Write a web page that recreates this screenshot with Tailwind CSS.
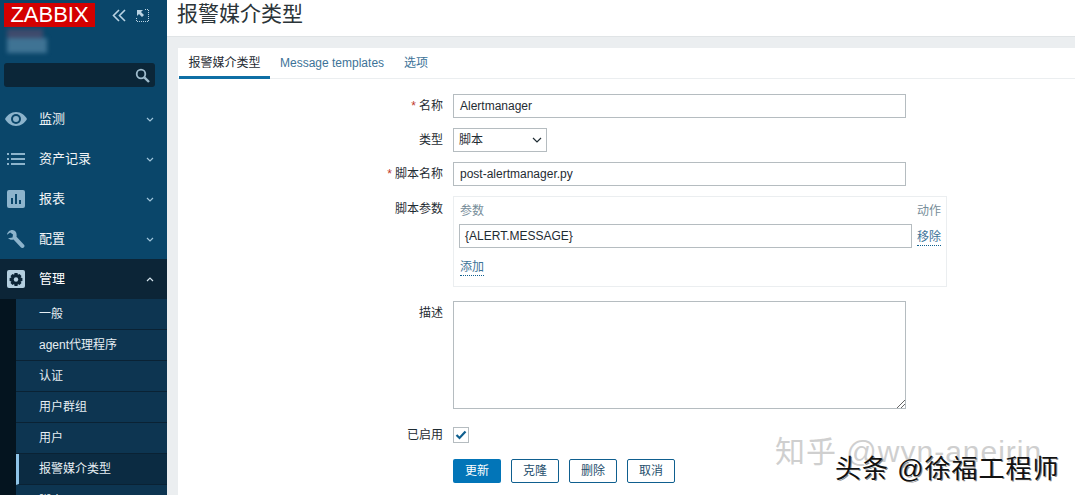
<!DOCTYPE html>
<html lang="zh-CN">
<head>
  <meta charset="UTF-8" />
  <title>报警媒介类型</title>
  <script src="https://cdn.jsdelivr.net/npm/@tailwindcss/browser@4"></script>
</head>
<body class="relative h-[495px] w-[1075px] overflow-hidden bg-[#ebeef0] font-['Liberation_Sans','Noto_Sans_CJK_SC',sans-serif] text-[12px] text-[#1f2c33]">
  <div class="flex h-[495px]">
    <!-- sidebar -->
    <aside class="flex h-[495px] w-[167px] shrink-0 flex-col overflow-hidden bg-[#0a466a] text-[#f2f5f7]">
      <div class="flex h-[28px] shrink-0 items-start pl-[4px] pt-[3px]">
        <div class="flex h-[24px] w-[91px] items-center justify-center bg-[#d40000] text-[22px] leading-none text-white">ZABBIX</div>
        <svg class="ml-[17px] mt-[6px]" width="14" height="13" viewBox="0 0 14 13" fill="none" stroke="#b9d3e3" stroke-width="1.6"><path d="M7 1 1.5 6.5 7 12M13 1 7.5 6.5 13 12"/></svg>
        <svg class="ml-[10px] mt-[6px]" width="13" height="13" viewBox="0 0 13 13" fill="none"><path d="M1 1h6L5 3l3 3-2 2-3-3-2 2z" fill="#b9d3e3"/><path d="M9 .5h3.500v12H.5V9" stroke="#b9d3e3" stroke-dasharray="1 1"/></svg>
      </div>
      <div class="ml-[7px] mt-[1px] flex h-[26px] w-[40px] shrink-0 flex-col blur-[2px]">
        <div class="h-[9px] w-[36px] bg-[#3f4a6c]"></div>
        <div class="h-[15px] w-[40px] bg-[#3f7394]"></div>
      </div>
      <div class="ml-[4px] mt-[8px] flex h-[24px] w-[151px] shrink-0 items-center justify-end rounded-[3px] bg-[#0b2638] pr-[5px]">
        <svg width="15" height="15" viewBox="0 0 15 15" fill="none" stroke="#9fbccd" stroke-width="1.800"><circle cx="6" cy="6" r="4.300"/><path d="m9.300 9.300 4.700 4.700" stroke-width="2.400"/></svg>
      </div>

      <nav class="mt-[12px] flex shrink-0 flex-col text-[13px]">
        <div class="flex h-[40px] items-center pl-[5px] pr-[13px]">
          <svg class="w-[22px]" width="22" height="14" viewBox="0 0 22 14"><path d="M11 0C6 0 2.300 3 0 7c2.300 4 6 7 11 7s8.700-3 11-7c-2.300-4-6-7-11-7z" fill="#8db4cc"/><circle cx="11" cy="7" r="5" fill="#0a466a"/><circle cx="11" cy="7" r="3" fill="#8db4cc"/></svg>
          <span class="ml-[12px] flex-1">监测</span>
          <svg width="8" height="5" viewBox="0 0 8 5" fill="none" stroke="#9fc4da" stroke-width="1.200"><path d="m1 1 3 3 3-3"/></svg>
        </div>
        <div class="flex h-[40px] items-center pl-[7px] pr-[13px]">
          <svg width="18" height="12" viewBox="0 0 18 12" fill="#8db4cc"><path d="M0 0h2v2H0zM4 0h14v2H4zM0 5h2v2H0zM4 5h14v2H4zM0 10h2v2H0zM4 10h14v2H4z"/></svg>
          <span class="ml-[14px] flex-1">资产记录</span>
          <svg width="8" height="5" viewBox="0 0 8 5" fill="none" stroke="#9fc4da" stroke-width="1.200"><path d="m1 1 3 3 3-3"/></svg>
        </div>
        <div class="flex h-[40px] items-center pl-[7px] pr-[13px]">
          <svg width="18" height="18" viewBox="0 0 18 18"><rect width="18" height="18" rx="2" fill="#8db4cc"/><path d="M4 8h2v6H4zM8 4h2v10H8zM12 10h2v4h-2z" fill="#0a466a"/></svg>
          <span class="ml-[14px] flex-1">报表</span>
          <svg width="8" height="5" viewBox="0 0 8 5" fill="none" stroke="#9fc4da" stroke-width="1.200"><path d="m1 1 3 3 3-3"/></svg>
        </div>
        <div class="flex h-[40px] items-center pl-[7px] pr-[13px]">
          <svg width="18" height="18" viewBox="0 0 18 18" fill="#8db4cc"><path d="M5.500 0C2.500 0 .2 2.200 0 4.800L3.200 2.500 6 4.500 5.500 7.500 1 8.300C2.300 9.600 4.500 10.200 6.500 9.500L14 17.500c.8.700 1.800.7 2.800 0 .8-.8 1-2 .2-2.800L9.500 6.800C10.200 3 8.500 0 5.500 0z"/></svg>
          <span class="ml-[14px] flex-1">配置</span>
          <svg width="8" height="5" viewBox="0 0 8 5" fill="none" stroke="#9fc4da" stroke-width="1.200"><path d="m1 1 3 3 3-3"/></svg>
        </div>
        <div class="flex h-[40px] items-center bg-[#0c2537] pl-[7px] pr-[13px] text-white">
          <svg width="18" height="18" viewBox="0 0 18 18"><rect width="18" height="18" rx="2" fill="#b4cfdf"/><path d="M7.500 3h3l.4 1.800 1.600-.8 2 2-.9 1.600 1.800.4v3l-1.800.4.900 1.600-2 2-1.600-.9-.4 1.900h-3l-.4-1.900-1.600.9-2-2 .9-1.600L2.600 11V8l1.800-.4-.9-1.600 2-2 1.600.8z" fill="#0c2537"/><circle cx="9" cy="9.500" r="2.200" fill="#b4cfdf"/></svg>
          <span class="ml-[14px] flex-1">管理</span>
          <svg width="8" height="5" viewBox="0 0 8 5" fill="none" stroke="#d7e6ef" stroke-width="1.200"><path d="m1 4 3-3 3 3"/></svg>
        </div>
        <div class="flex bg-[#04141f]">
          <ul class="ml-[16px] w-[151px] text-[12px] text-[#e6eef3]">
            <li class="flex h-[31px] items-center border-b border-[#0a2234] bg-[#0d3551] pl-[23px]">一般</li>
            <li class="flex h-[31px] items-center border-b border-[#0a2234] bg-[#0d3551] pl-[23px]">agent代理程序</li>
            <li class="flex h-[31px] items-center border-b border-[#0a2234] bg-[#0d3551] pl-[23px]">认证</li>
            <li class="flex h-[31px] items-center border-b border-[#0a2234] bg-[#0d3551] pl-[23px]">用户群组</li>
            <li class="flex h-[31px] items-center border-b border-[#0a2234] bg-[#0d3551] pl-[23px]">用户</li>
            <li class="flex h-[31px] items-center border-b border-[#0a2234] border-l-[3px] border-l-[#8fc4e8] bg-[#0b2b42] pl-[20px]">报警媒介类型</li>
            <li class="flex h-[31px] items-center bg-[#0d3551] pl-[23px]">脚本</li>
          </ul>
        </div>
      </nav>
    </aside>

    <!-- main -->
    <main class="flex min-w-0 flex-1 flex-col">
      <header class="flex h-[37px] shrink-0 items-start border-b border-[#e0e4e6] bg-white pl-[10px]">
        <h1 class="text-[21px] leading-[27px] font-normal text-[#2b3438]">报警媒介类型</h1>
      </header>
      <section class="ml-[11px] mt-[11px] h-[447px] flex-1 bg-white">
        <div class="flex h-[31px] border-b border-[#ebeef0] pl-px text-[12px]">
          <div class="flex h-[31px] w-[91px] items-center justify-center border-b-[3px] border-[#0f6fa5] pt-px text-[#1f2c33]">报警媒介类型</div>
          <div class="flex h-[29px] items-center pl-[10px] pr-[10px] text-[#3d7398]">Message templates</div>
          <div class="flex h-[29px] items-center pl-[10px] text-[#3d7398]">选项</div>
        </div>

        <form class="grid grid-cols-[265px_1fr] pt-[15px]">
          <label class="flex h-[24px] items-center justify-end"><span class="mr-[3px] text-[#c0392b]">*</span>名称</label>
          <div class="ml-[10px] flex h-[24px] w-[453px] items-center border border-[#b5bcc0] px-[6px]">Alertmanager</div>

          <label class="mt-[10px] flex h-[24px] items-center justify-end">类型</label>
          <div class="ml-[10px] mt-[10px] flex h-[24px] w-[94px] items-center justify-between border border-[#b5bcc0] pl-[5px] pr-[4px]">
            脚本
            <svg width="10" height="6" viewBox="0 0 10 6" fill="none" stroke="#1f2c33" stroke-width="1.200"><path d="m1 1 4 4 4-4"/></svg>
          </div>

          <label class="mt-[10px] flex h-[24px] items-center justify-end"><span class="mr-[3px] text-[#c0392b]">*</span>脚本名称</label>
          <div class="ml-[10px] mt-[10px] flex h-[24px] w-[453px] items-center border border-[#b5bcc0] px-[6px]">post-alertmanager.py</div>

          <label class="mt-[10px] flex h-[24px] items-start justify-end pt-[4px]">脚本参数</label>
          <div class="ml-[10px] mt-[10px] h-[91px] w-[494px] border border-[#ebeef0] px-[5px]">
            <div class="flex h-[27px] items-center justify-between text-[#768d99]"><span class="pl-px">参数</span><span>动作</span></div>
            <div class="flex items-center">
              <div class="flex h-[24px] w-[453px] shrink-0 items-center border border-[#b5bcc0] px-[5px]">{ALERT.MESSAGE}</div>
              <a class="ml-[5px] mt-[3px] shrink-0 whitespace-nowrap border-b border-dotted border-[#0f5f8f] leading-[15px] text-[#3d7398]">移除</a>
            </div>
            <div class="mt-[10px] pl-px"><a class="inline-block border-b border-dotted border-[#0f5f8f] leading-[15px] text-[#3d7398]">添加</a></div>
          </div>

          <label class="mt-[14px] flex h-[24px] items-start justify-end pt-[3px]">描述</label>
          <div class="relative ml-[10px] mt-[14px] h-[108px] w-[453px] border border-[#b5bcc0]">
            <svg class="absolute bottom-0 right-0" width="9" height="9" viewBox="0 0 9 9" stroke="#666" fill="none"><path d="M1 9 9 1M5 9l4-4"/></svg>
          </div>

          <label class="mt-[18px] flex h-[16px] items-center justify-end">已启用</label>
          <div class="ml-[10px] mt-[18px] flex h-[16px] w-[16px] items-center justify-center border border-[#b5bcc0]">
            <svg width="12" height="10" viewBox="0 0 12 10" fill="none" stroke="#0f5f8f" stroke-width="2.200"><path d="m1.500 5 3 3 6-6.500"/></svg>
          </div>

          <div></div>
          <div class="ml-[10px] mt-[16px] flex gap-[10px]">
            <button type="button" class="h-[24px] w-[48px] rounded-[2px] bg-[#0275b8] text-white">更新</button>
            <button type="button" class="h-[24px] w-[48px] rounded-[2px] border border-[#0f5f8f] text-[#1f4f6d]">克隆</button>
            <button type="button" class="h-[24px] w-[48px] rounded-[2px] border border-[#0f5f8f] text-[#1f4f6d]">删除</button>
            <button type="button" class="h-[24px] w-[48px] rounded-[2px] border border-[#0f5f8f] text-[#1f4f6d]">取消</button>
          </div>
        </form>
      </section>
    </main>
  </div>

  <!-- watermarks sit over the page -->
  <div class="absolute left-[775px] top-[437px] whitespace-nowrap text-[30px] leading-[30px] tracking-[1px] text-[#cfcfcf]">知乎 @wyn-aneirin</div>
  <div class="absolute left-[835px] top-[454px] whitespace-nowrap text-[26px] leading-[30px] tracking-[1px] text-[#111] [text-shadow:-1px_1px_0_#fff,1px_1px_0_#888]">头条 @徐福工程师</div>
</body>
</html>
